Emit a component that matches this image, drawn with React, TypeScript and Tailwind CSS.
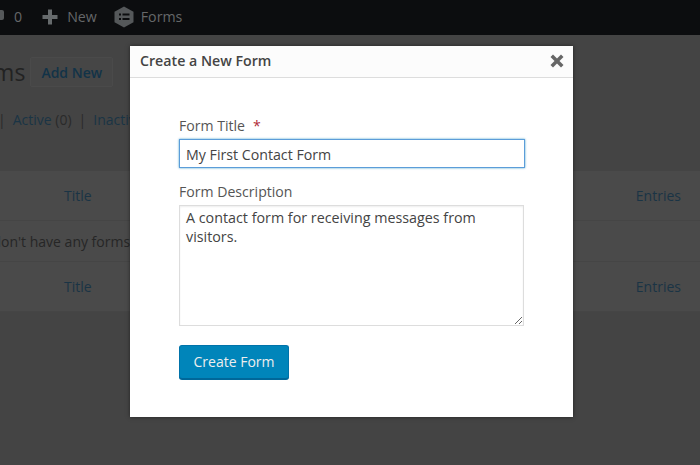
const font = "font-['Open_Sans',sans-serif]";

function TableRow({ first }: { first: string }) {
  return (
    <div className="flex h-[50px] items-center justify-between border-b border-[#454545] bg-[#4a4a4a] pl-[64px] pr-[19px] text-[14px] text-[#1a3445]">
      <span>{first}</span>
      <span>Entries</span>
    </div>
  );
}

export default function App() {
  return (
    <div className={`relative h-[465px] w-[700px] overflow-hidden bg-[#444444] ${font}`}>
      {/* admin bar */}
      <div className="flex h-[35px] items-center bg-[#0c0d0f] pb-[1px] text-[14.2px] text-[#656769]">
        <svg width="4" height="14" viewBox="0 0 4 14" className="mb-[3px]">
          <path d="M0 1h2a2 2 0 0 1 2 2v6a2 2 0 0 1-2 2H0z" fill="#55585a" />
        </svg>
        <span className="ml-[10px]">0</span>
        <svg width="16" height="16" viewBox="0 0 16 16" className="ml-[20px]">
          <path d="M6 0.5h4v5.5h5.5v4H10v5.5H6V10H0.5V6H6z" fill="#666a6c" />
        </svg>
        <span className="ml-[9px]">New</span>
        <svg width="20" height="22" viewBox="0 0 20 22" className="ml-[17px]">
          <path d="M10 0.5l9.5 5.2v10.6L10 21.5 0.5 16.3V5.7z" fill="#55585a" />
          <path d="M5 7.5h2v2H5zM8.5 7.5h7v2h-7zM5 12h2v2H5zM8.5 12h7v2h-7z" fill="#0c0d0f" />
        </svg>
        <span className="ml-[7px]">Forms</span>
      </div>

      {/* page behind the overlay */}
      <div className="mt-[22px] flex h-[30px] items-center">
        <div className="-ml-[42px] flex items-center">
          <span className="text-[23px] text-[#222222]">Forms</span>
          <span className="ml-[5px] flex h-[30px] items-center rounded-[2px] border border-[#4a4a4a] bg-[#464646] px-[10px] text-[14px] font-semibold text-[#123348]">
            Add New
          </span>
        </div>
      </div>
      <div className="-ml-[2px] mt-[21px] flex h-[22px] items-center gap-[7px] text-[14px] text-[#222222]">
        <span className="text-[#2a2a2a]">|</span>
        <span className="text-[#1a3445]">Active <span className="text-[#2a2a2a]">(0)</span></span>
        <span className="text-[#2a2a2a]">|</span>
        <span className="text-[#1a3445]">Inactive</span>
      </div>
      <div className="mt-[41px]">
        <TableRow first="Title" />
        <div className="flex h-[41px] items-center overflow-hidden whitespace-nowrap border-b border-[#454545] bg-[#4a4a4a] text-[14px] text-[#262626]">
          <span className="-ml-[36px]">You don't have any forms yet.</span>
        </div>
        <TableRow first="Title" />
      </div>

      {/* modal */}
      <div className="absolute left-[130px] top-[46px] h-[371px] w-[443px] bg-white shadow-[0_0_4px_rgba(0,0,0,0.5)]">
        <div className="flex h-[32px] items-center justify-between border-b border-[#dddddd] bg-[#fcfcfc] pl-[10px] pr-[9px] text-[14.2px] font-semibold text-[#444444]">
          <span className="-mt-[1px]">Create a New Form</span>
          <svg width="14" height="14" viewBox="0 0 14 14" className="-mt-[1px]">
            <path d="M3 0.5l4 4 4-4 2.5 2.5-4 4 4 4-2.5 2.5-4-4-4 4-2.5-2.5 4-4-4-4z" fill="#666666" />
          </svg>
        </div>
        <div className="pl-[49px] pr-[48px] pt-[38px] text-[14.1px] text-[#555555]">
          <div className="flex h-[19px] items-center">
            Form Title <span className="ml-[8px] text-[#b02a37]">*</span>
          </div>
          <input
            readOnly
            value="My First Contact Form"
            className="mt-[4px] box-border h-[29px] w-[346px] border border-[#5b9dd9] px-[6px] pt-[1px] text-[14.2px] text-[#444444] shadow-[0_0_2px_rgba(30,140,190,0.8)] outline-none"
          />
          <div className="mt-[14px] flex h-[19px] items-center">Form Description</div>
          <textarea
            readOnly
            value="A contact form for receiving messages from visitors."
            className="mt-[4px] box-border block h-[121px] w-[345px] border border-[#dddddd] px-[6px] py-[2px] text-[14.3px] leading-[19px] text-[#444444] shadow-[inset_0_1px_2px_rgba(0,0,0,0.07)] outline-none"
          />
          <button className="mt-[19px] flex h-[34px] w-[110px] items-center justify-center rounded-[3px] border border-[#0073aa] border-b-[#006799] bg-[#0085ba] pb-[1px] text-[14px] text-[#eeeeee] shadow-[0_1px_0_#006799]">
            Create Form
          </button>
        </div>
      </div>
    </div>
  );
}
